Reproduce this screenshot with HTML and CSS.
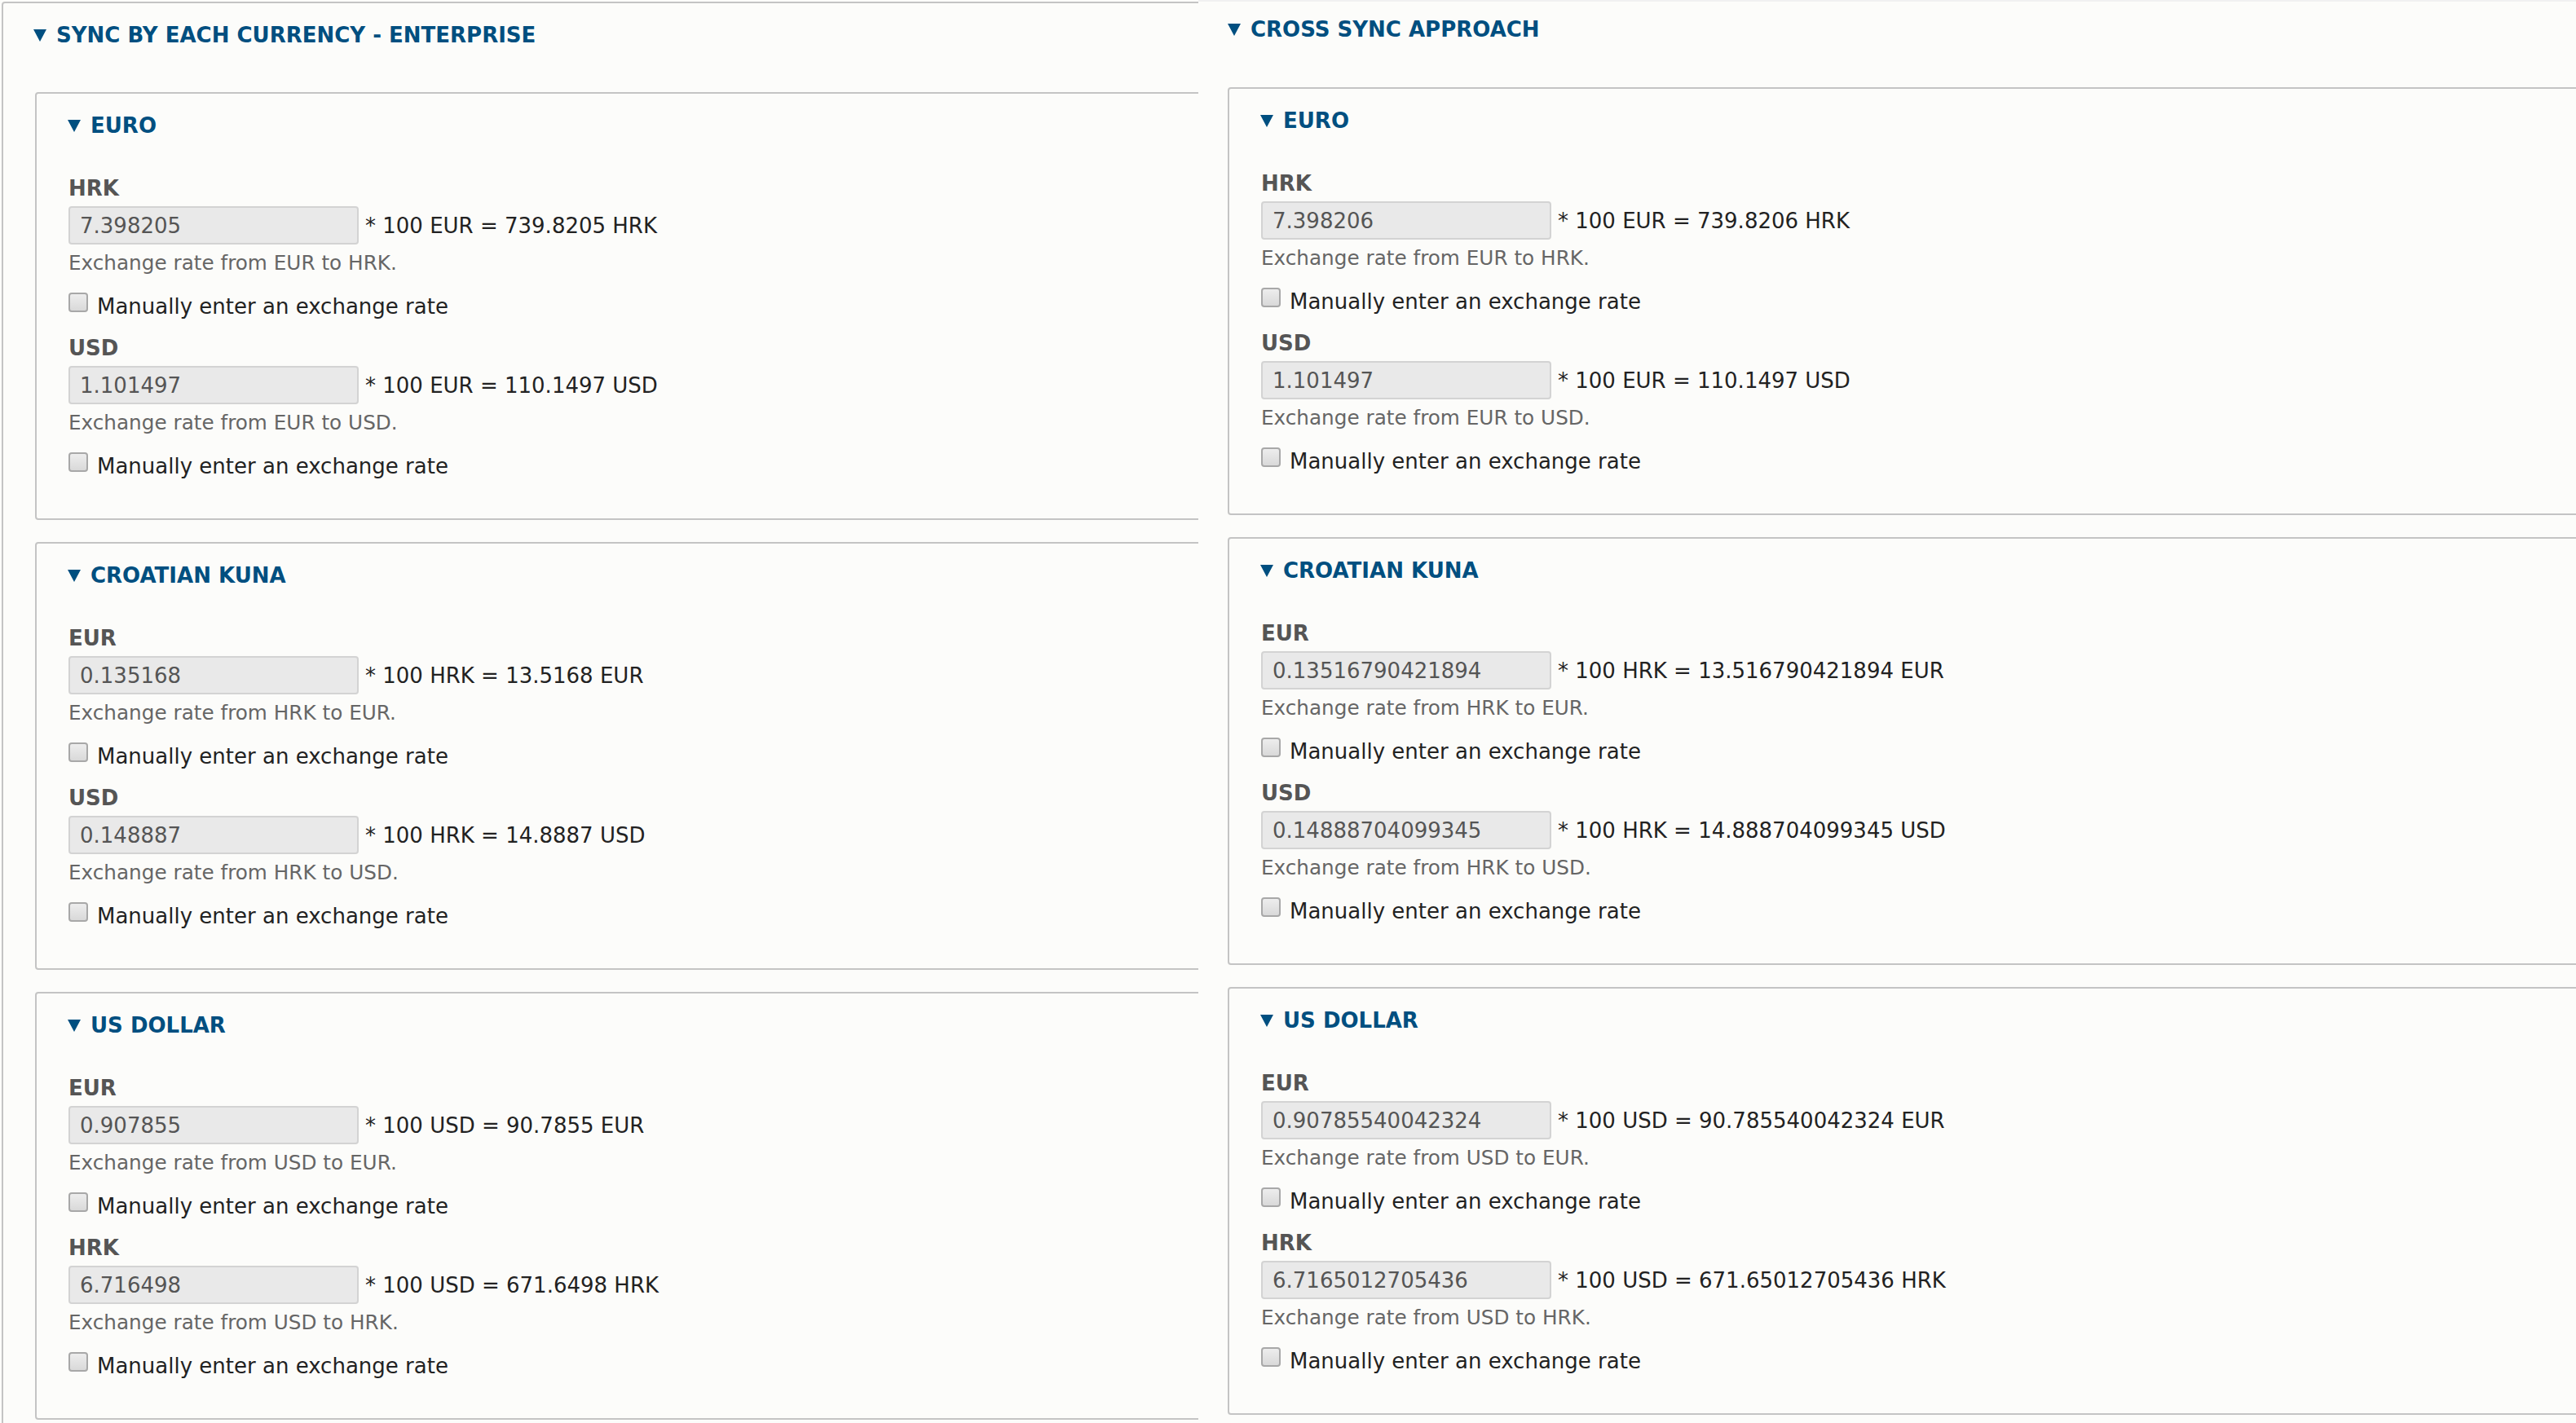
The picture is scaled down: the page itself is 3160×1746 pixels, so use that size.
FILE: index.html
```html
<!DOCTYPE html>
<html lang="en">
<head>
<meta charset="UTF-8">
<meta name="viewport" content="width=device-width,initial-scale=1">
<title>Exchange rates – sync comparison</title>
<link rel="stylesheet" href="styles.css">
</head>
<body>
<div class="page">

<!-- ===== left: per-currency sync ===== -->
<div class="col">
  <div class="group">
    <div class="legend">Sync by each currency - Enterprise</div>

    <div class="currency">
      <div class="legend">Euro</div>
      <div class="rates">
        <div class="rate">
          <label class="name">HRK</label>
          <div class="field"><input type="text" value="7.398205" readonly><span>* 100 EUR = 739.8205 HRK</span></div>
          <p class="desc">Exchange rate from EUR to HRK.</p>
          <label class="check"><input type="checkbox"><span>Manually enter an exchange rate</span></label>
        </div>
        <div class="rate">
          <label class="name">USD</label>
          <div class="field"><input type="text" value="1.101497" readonly><span>* 100 EUR = 110.1497 USD</span></div>
          <p class="desc">Exchange rate from EUR to USD.</p>
          <label class="check"><input type="checkbox"><span>Manually enter an exchange rate</span></label>
        </div>
      </div>
    </div>

    <div class="currency">
      <div class="legend">Croatian Kuna</div>
      <div class="rates">
        <div class="rate">
          <label class="name">EUR</label>
          <div class="field"><input type="text" value="0.135168" readonly><span>* 100 HRK = 13.5168 EUR</span></div>
          <p class="desc">Exchange rate from HRK to EUR.</p>
          <label class="check"><input type="checkbox"><span>Manually enter an exchange rate</span></label>
        </div>
        <div class="rate">
          <label class="name">USD</label>
          <div class="field"><input type="text" value="0.148887" readonly><span>* 100 HRK = 14.8887 USD</span></div>
          <p class="desc">Exchange rate from HRK to USD.</p>
          <label class="check"><input type="checkbox"><span>Manually enter an exchange rate</span></label>
        </div>
      </div>
    </div>

    <div class="currency">
      <div class="legend">US Dollar</div>
      <div class="rates">
        <div class="rate">
          <label class="name">EUR</label>
          <div class="field"><input type="text" value="0.907855" readonly><span>* 100 USD = 90.7855 EUR</span></div>
          <p class="desc">Exchange rate from USD to EUR.</p>
          <label class="check"><input type="checkbox"><span>Manually enter an exchange rate</span></label>
        </div>
        <div class="rate">
          <label class="name">HRK</label>
          <div class="field"><input type="text" value="6.716498" readonly><span>* 100 USD = 671.6498 HRK</span></div>
          <p class="desc">Exchange rate from USD to HRK.</p>
          <label class="check"><input type="checkbox"><span>Manually enter an exchange rate</span></label>
        </div>
      </div>
    </div>
  </div>
</div>

<!-- ===== right: cross sync ===== -->
<div class="col col--right">
  <div class="group">
    <div class="legend">Cross sync approach</div>

    <div class="currency">
      <div class="legend">Euro</div>
      <div class="rates">
        <div class="rate">
          <label class="name">HRK</label>
          <div class="field"><input type="text" value="7.398206" readonly><span>* 100 EUR = 739.8206 HRK</span></div>
          <p class="desc">Exchange rate from EUR to HRK.</p>
          <label class="check"><input type="checkbox"><span>Manually enter an exchange rate</span></label>
        </div>
        <div class="rate">
          <label class="name">USD</label>
          <div class="field"><input type="text" value="1.101497" readonly><span>* 100 EUR = 110.1497 USD</span></div>
          <p class="desc">Exchange rate from EUR to USD.</p>
          <label class="check"><input type="checkbox"><span>Manually enter an exchange rate</span></label>
        </div>
      </div>
    </div>

    <div class="currency">
      <div class="legend">Croatian Kuna</div>
      <div class="rates">
        <div class="rate">
          <label class="name">EUR</label>
          <div class="field"><input type="text" value="0.13516790421894" readonly><span>* 100 HRK = 13.516790421894 EUR</span></div>
          <p class="desc">Exchange rate from HRK to EUR.</p>
          <label class="check"><input type="checkbox"><span>Manually enter an exchange rate</span></label>
        </div>
        <div class="rate">
          <label class="name">USD</label>
          <div class="field"><input type="text" value="0.14888704099345" readonly><span>* 100 HRK = 14.888704099345 USD</span></div>
          <p class="desc">Exchange rate from HRK to USD.</p>
          <label class="check"><input type="checkbox"><span>Manually enter an exchange rate</span></label>
        </div>
      </div>
    </div>

    <div class="currency">
      <div class="legend">US Dollar</div>
      <div class="rates">
        <div class="rate">
          <label class="name">EUR</label>
          <div class="field"><input type="text" value="0.90785540042324" readonly><span>* 100 USD = 90.785540042324 EUR</span></div>
          <p class="desc">Exchange rate from USD to EUR.</p>
          <label class="check"><input type="checkbox"><span>Manually enter an exchange rate</span></label>
        </div>
        <div class="rate">
          <label class="name">HRK</label>
          <div class="field"><input type="text" value="6.7165012705436" readonly><span>* 100 USD = 671.65012705436 HRK</span></div>
          <p class="desc">Exchange rate from USD to HRK.</p>
          <label class="check"><input type="checkbox"><span>Manually enter an exchange rate</span></label>
        </div>
      </div>
    </div>
  </div>
</div>

</div>
</body>
</html>
```

FILE: styles.css
```css
:root{
  --bg:#fcfcfa;--fg:#222;--legend:#004f80;--label:#555;--line:#c4c4c4;
}
*{box-sizing:border-box;margin:0;padding:0}
body{font:26px/30px "DejaVu Sans","Noto Sans",sans-serif;color:var(--fg);
     background:var(--bg);overflow:hidden}

/* two screenshots side by side, both clipped on the right */
.page{display:grid;grid-template-columns:1470px 1fr;height:1746px;overflow:hidden}
.col{overflow:hidden;min-width:0}

/* outer group */
.group{width:calc(100% + 200px);margin:2px 0 0 2px;border:2px solid var(--line);
       border-radius:4px;padding:24px 0 0 39px}
.group > .legend{margin:0 0 55px -2px}
.col--right .group{margin:0;border:0;border-top:2px solid #f1f1f1;border-radius:0;
                   padding:19px 0 0 36px}
.col--right .group > .legend{margin:0 0 56px 0}

/* summary line with the ▼ marker */
.legend{display:flex;align-items:center;gap:12px;font-weight:bold;
        text-transform:uppercase;color:var(--legend);white-space:nowrap}
.legend::before{content:"";flex:none;border-left:8px solid transparent;
                border-right:8px solid transparent;border-top:15px solid currentColor}

/* one currency box */
.currency{border:2px solid var(--line);border-radius:4px;padding:24px 0 49px 38px;
          margin-bottom:27px}
.currency .legend{margin-bottom:47px}
.rates{display:flex;flex-direction:column;gap:21px;padding-left:1px}

.name{display:block;font-weight:bold;color:var(--label)}
.field{display:flex;align-items:center;gap:8px;margin-top:7px;white-space:nowrap}
.field input{width:356px;height:47px;padding:0 12px;font:inherit;color:var(--label);
             background:#e9e9e9;border:2px solid #d3d3d3;border-radius:4px;outline:none}
.desc{font-size:24.7px;color:#666;margin-top:8px;white-space:nowrap}

.check{display:flex;align-items:flex-start;gap:11px;margin-top:21px;height:32px;
       white-space:nowrap}
.check span{padding-top:2px}
.check input{appearance:none;-webkit-appearance:none;flex:none;width:24px;height:24px;
             border:2px solid #a8a8a8;border-radius:4px;
             background:linear-gradient(#ededed,#d9d9d9)}
```
